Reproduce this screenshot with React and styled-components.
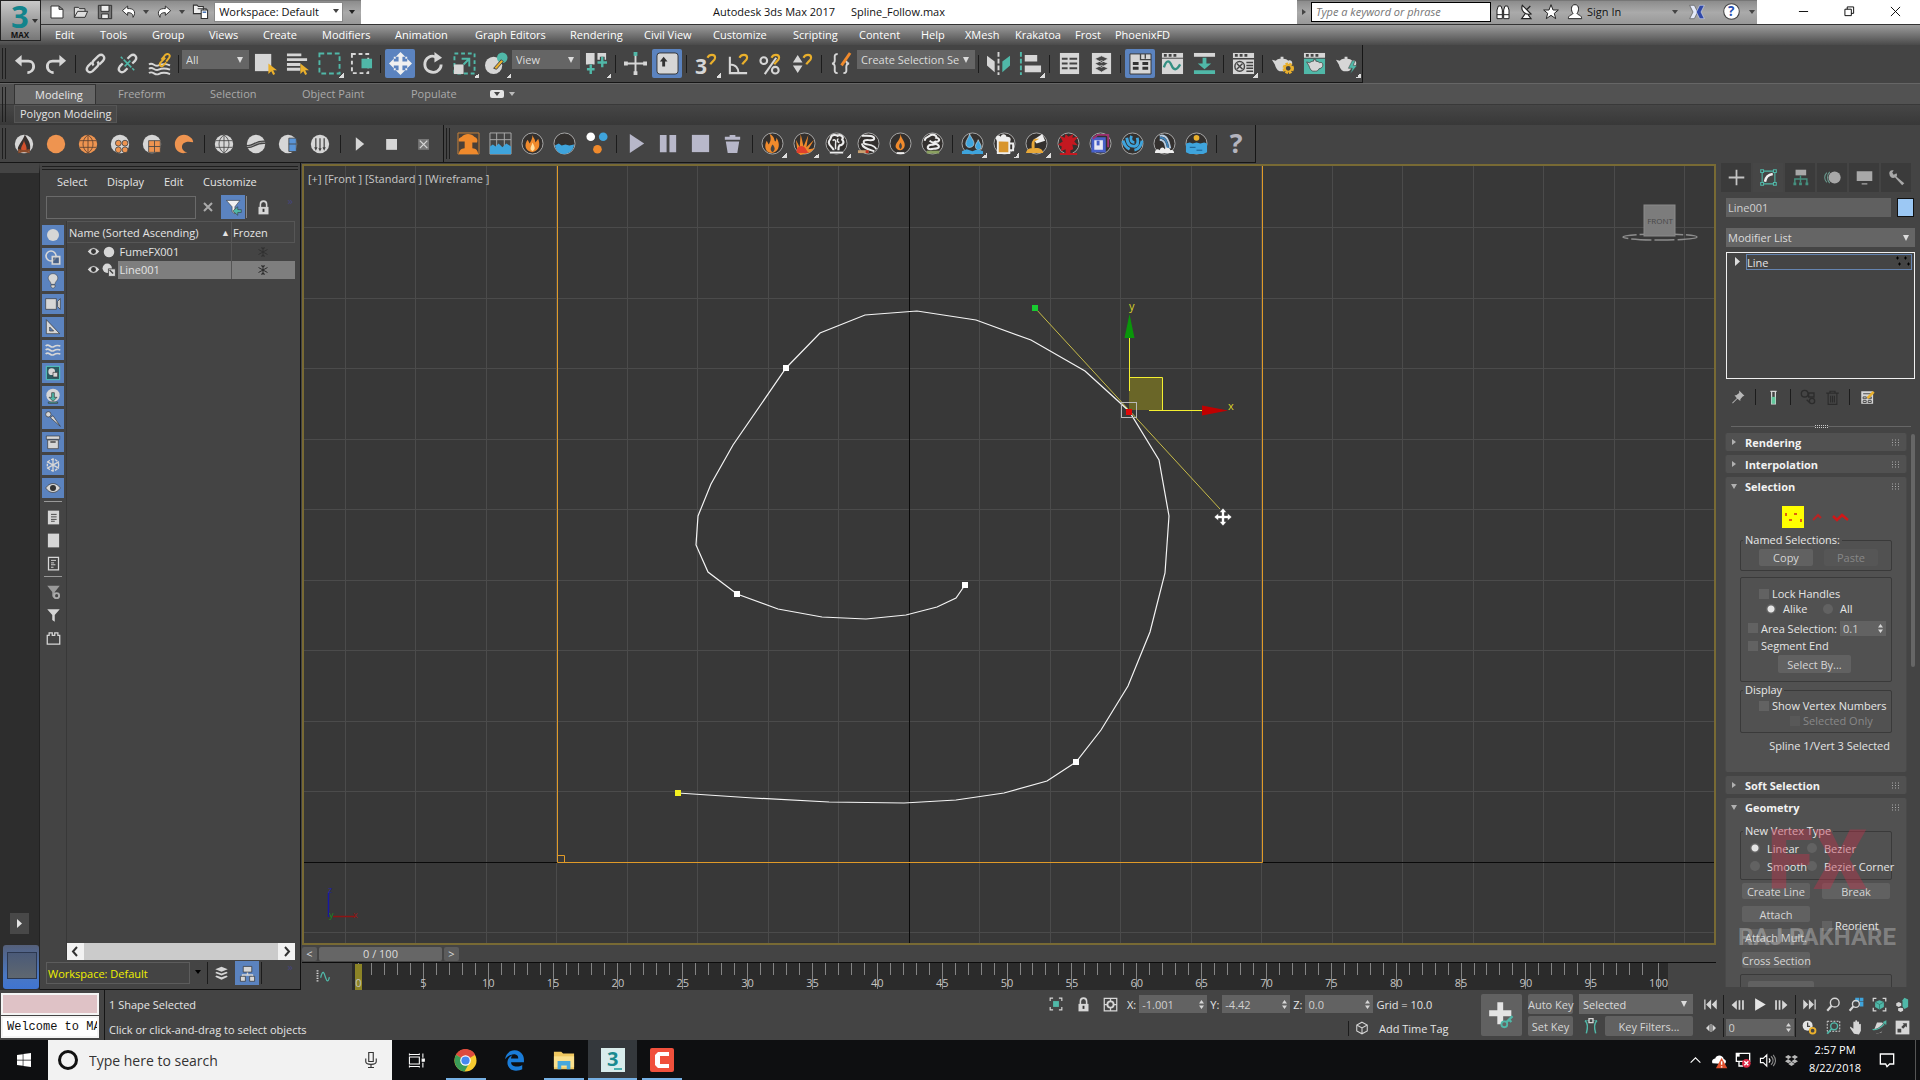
import React from "react";
import styled, { createGlobalStyle, css } from "styled-components";
import { FaWindows, FaEdgeLegacy, FaDropbox } from "react-icons/fa";

const GlobalStyle = createGlobalStyle`
  *, *::before, *::after {
    box-sizing: border-box;
  }
  body {
    margin: 0;
    background: #444;
    color: #e4e4e4;
    font-family: "Open Sans", "Noto Sans", sans-serif;
    font-size: 11px;
    overflow: hidden;
  }
  button, input, select {
    font: inherit;
    color: inherit;
    margin: 0;
    padding: 0;
    border: 0;
    border-radius: 0;
    background: none;
    min-width: 0;
  }
`;

const L = "#d6d6d6";
const TEAL = "#50b8a8";
const GOLD = "#eab02c";
const ORANGE = "#f08a2c";
const BLUE = "#3fa4dc";

/* ---------- shared parts ---------- */

const Svg = styled.svg`
  width: ${(p) => p.$size || 24}px;
  height: ${(p) => p.$size || 24}px;
  flex: none;
  display: block;
  overflow: visible;
`;

const Page = styled.div`
  display: flex;
  flex-direction: column;
  height: 100vh;
`;

const SelectWrap = styled.label`
  position: relative;
  display: block;
  flex: none;
  width: ${(p) => (p.$w ? p.$w + "px" : "100%")};
  height: ${(p) => p.$h || 19}px;

  & > select {
    appearance: none;
    width: 100%;
    height: 100%;
    padding: 0 14px 0 4px;
    background: #656565;
    color: #dcdcdc;
  }
  &::after {
    content: "";
    position: absolute;
    right: 6px;
    top: calc(50% - 3px);
    border: 3px solid transparent;
    border-top: 6px solid #dcdcdc;
    border-bottom: 0;
    pointer-events: none;
  }
`;

const Select = ({ w, h, label, value }) => (
  <SelectWrap $w={w} $h={h}>
    <select aria-label={label} defaultValue={value}>
      <option>{value}</option>
    </select>
  </SelectWrap>
);

const SpinWrap = styled.label`
  display: flex;
  align-items: center;
  gap: 3px;
  height: ${(p) => p.$h || 18}px;

  & > span:last-child {
    display: flex;
    align-items: center;
    width: ${(p) => p.$w || 68}px;
    height: 100%;
    background: #626262;
    color: #cfcfcf;
  }
  input {
    flex: 1;
    width: 10px;
    padding-left: 3px;
  }
`;

const Spin = ({ label, hidden, value, w, h }) => (
  <SpinWrap $w={w} $h={h}>
    {hidden ? null : <span>{label}</span>}
    <span>
      <input type="text" aria-label={label} defaultValue={value} />
      <Svg $size={11} viewBox="0 0 11 11">
        <path d="M3 4.5L5.500 1L8 4.500zM3 6.500L5.500 10L8 6.500z" fill={L} />
      </Svg>
    </span>
  </SpinWrap>
);

/* ---------- icon drawings ---------- */

const magnet = (
  <path d="M13 6c2-4 8-4 8 0 0 3-4 4-5 7" fill="none" stroke={GOLD} strokeWidth="2.200" />
);
const pointer = <path d="M15 12v11l3-3 2 4 2-1-2-4h4z" fill={GOLD} />;
const teapot = (
  <path
    d="M1 8l4 1c2-2 4-2 5-2V5h3v2c2 0 4 1 5 2 4-2 6 4 2 7l-3 1c-1 2-2 3-4 3H9c-3-1-4-4-5-7z"
    fill={L}
  />
);
const ring = <circle cx="12" cy="12" r="11" fill="#33302e" stroke="#a8a8a8" />;

const ICONS = {
  undo: <path d="M9 3L2 9l7 6v-4h7c3 0 4 1 4 4s-2 5-5 5v3c5-1 8-4 8-8s-3-7-7-7H9z" fill={L} />,
  redo: <path d="M15 3l7 6-7 6v-4H8c-3 0-4 1-4 4s2 5 5 5v3c-5-1-8-4-8-8s3-7 7-7h7z" fill={L} />,
  link: (
    <g fill="none" stroke={L} strokeWidth="2.400">
      <path d="M10 14c-2-2-1-4 0-5l5-5c4-3 8 1 5 5l-4 4" />
      <path d="M14 10c2 2 1 4 0 5l-5 5c-4 3-8-1-5-5l4-4" />
    </g>
  ),
  unlink: (
    <g fill="none" stroke={L} strokeWidth="2.400">
      <path d="M12 7l3-3c4-3 8 1 5 5l-3 3M12 17l-3 3c-4 3-8-1-5-5l3-3" />
      <path d="M8 8l8 8M5 5l2 2M17 17l2 2M9 15l6-6" stroke={TEAL} strokeWidth="1.600" />
    </g>
  ),
  bind: (
    <g fill="none" strokeWidth="2">
      <path d="M1 13c4-3 6 3 10 1s7-2 12 0M1 17.500c4-3 6 3 10 1s7-2 12 0M1 22c4-3 6 3 10 1s7-2 12 0" stroke={L} />
      <path d="M14 8l4-5c3-2 6 0 4 3l-3 4M18 6l-5 5c-2 3 1 5 3 3l3-3" stroke={GOLD} />
    </g>
  ),
  selectObject: (
    <g>
      <path d="M1 2h17v18H1z" fill={L} />
      {pointer}
    </g>
  ),
  selectName: (
    <g>
      <path d="M1 3h15M1 8h21M1 13h14M1 18h14" stroke={L} strokeWidth="3" />
      {pointer}
    </g>
  ),
  region: <path d="M1.500 1.500h21v21h-21z" fill="none" stroke={TEAL} strokeWidth="2" strokeDasharray="5 3" />,
  windowCross: (
    <g>
      <path d="M2 2h17v20H2z" fill="none" stroke={L} strokeWidth="2" strokeDasharray="4 3" />
      <path d="M12 7h11v10H12z" fill={TEAL} />
    </g>
  ),
  move: (
    <g fill="#f0f0f0">
      <path d="M12 0l5 5h-3v5h5V7l5 5-5 5v-3h-5v5h3l-5 5-5-5h3v-5H5v3l-5-5 5-5v3h5V5H7z" />
      <path d="M5 5h2v2H5zM17 5h2v2h-2zM5 17h2v2H5zM17 17h2v2h-2z" />
    </g>
  ),
  rotate: (
    <g>
      <path d="M16 6c-5-4-12 0-12 7s8 10 13 7c3-2 4-4 4-7" fill="none" stroke={L} strokeWidth="3" />
      <path d="M14 0v11l8-5z" fill={L} />
    </g>
  ),
  scale: (
    <g>
      <path d="M1.500 1.500h21v21h-21z" fill="none" stroke={TEAL} strokeWidth="2" strokeDasharray="4 3" />
      <path d="M1 13h10v10H1z" fill={L} />
      <path d="M9 7h8v8M17 7l-6 6" fill="none" stroke={TEAL} strokeWidth="2" />
    </g>
  ),
  place: (
    <g>
      <circle cx="9" cy="14" r="9" fill={L} />
      <circle cx="18" cy="6" r="5.500" fill={TEAL} />
      <path d="M9 17l8-9 2 2-7 8z" fill={GOLD} stroke="#444" />
    </g>
  ),
  pivot: (
    <g>
      <path d="M1 1h9v12H1zM13 1h9v7h-9z" fill={L} />
      <path d="M6 13v10M2 18h8M18 5v11M13 11h10" stroke="#444" strokeWidth="5" />
      <path d="M6 13v10M2 18h8M18 5v11M13 11h10" stroke={TEAL} strokeWidth="2.500" />
    </g>
  ),
  manipulate: (
    <g>
      <path d="M12 3v18M3 12h18" stroke={L} strokeWidth="2" />
      <path d="M10 0h4v4h-4z" fill={TEAL} />
      <path d="M0 10h4v4H0zM20 10h4v4h-4zM10 20h4v4h-4z" fill={L} />
    </g>
  ),
  keyboard: (
    <g>
      <rect x="1" y="1" width="22" height="22" rx="3" fill={L} stroke="#333" />
      <path d="M8 5l4 5H9.500v5h-3v-5H4z" fill="#333" />
    </g>
  ),
  snap3: (
    <g>
      <text x="0" y="23" fontSize="22" fontWeight="bold" fill={L}>3</text>
      {magnet}
    </g>
  ),
  angle: (
    <g>
      <path d="M3 5v17h18M3 13c6 0 9 4 9 9" fill="none" stroke={L} strokeWidth="2.200" />
      {magnet}
    </g>
  ),
  percent: (
    <g>
      <path d="M18 6L6 23" stroke={L} strokeWidth="2.200" />
      <circle cx="5" cy="9" r="3.500" fill="none" stroke={L} strokeWidth="2.200" />
      <circle cx="17" cy="19" r="3.500" fill="none" stroke={L} strokeWidth="2.200" />
      {magnet}
    </g>
  ),
  spinner: (
    <g>
      <path d="M2 11l5-8 5 8zM2 14h10l-5 8z" fill={L} />
      {magnet}
    </g>
  ),
  braces: (
    <g fill="none" stroke={L} strokeWidth="2">
      <path d="M8 2C4 2 5 5 5 8s-1 4-3 4c2 0 3 1 3 4s-1 6 3 6M14 22c4 0 3-3 3-6s1-4 3-4c-2 0-3-1-3-3" />
      <path d="M12 14L21 1" stroke={ORANGE} strokeWidth="3" />
    </g>
  ),
  mirror: (
    <g>
      <path d="M0 4l8 6v11l-8-7z" fill={L} />
      <path d="M24 4l-8 6v11l8-7z" fill={TEAL} />
      <path d="M12 0v24" stroke={L} strokeWidth="2" strokeDasharray="5 2" />
    </g>
  ),
  align: (
    <g>
      <path d="M2 0v24" stroke={TEAL} strokeWidth="2" strokeDasharray="5 2" />
      <path d="M6 3h13v7H6zM6 14h17v7H6z" fill={L} />
    </g>
  ),
  layers: (
    <g>
      <path d="M2 1h20v22H2z" fill={L} />
      <path d="M4 7h6M12 7h8M4 12h6M12 12h8M4 17h6M12 17h8" stroke="#444" strokeWidth="2.200" />
    </g>
  ),
  toggleLayers: (
    <g>
      <path d="M2 1h20v22H2z" fill={L} />
      <path d="M12 4l7 3-7 4-7-4zM12 9l7 3-7 4-7-4zM12 14l7 3-7 4-7-4z" fill="#444" stroke={L} strokeWidth=".8" />
    </g>
  ),
  ribbonToggle: (
    <g>
      <path d="M1 2h22v21H1z" fill={L} stroke="#333" />
      <path d="M12 2v6h11M17 2v5" stroke="#444" fill="none" strokeWidth="1.400" />
      <path d="M4 12h6M14 12h6M4 17h6M14 17h6" stroke="#333" strokeWidth="3" />
    </g>
  ),
  curve: (
    <g>
      <path d="M1 1h22v22H1z" fill={L} />
      <path d="M3 2h3v3H3zM8 2h3v3H8zM13 2h3v3h-3z" fill="#444" />
      <path d="M1 6.500h22" stroke="#444" />
      <path d="M3 16c3-9 6-7 8-2s5 6 9-1" fill="none" stroke="#338f82" strokeWidth="2.500" />
    </g>
  ),
  schematic: (
    <g>
      <path d="M1 1h22v4H1z" fill={L} />
      <path d="M1 19h22v4H1zM10 6h4v6h5l-7 6-7-6h5z" fill={TEAL} />
    </g>
  ),
  material: (
    <g>
      <path d="M1 1h22v22H1z" fill={L} />
      <path d="M3 2h3v3H3zM8 2h3v3H8zM13 2h3v3h-3z" fill="#444" />
      <path d="M1 7h22M15 11h7M15 14h7M15 17h7M15 20h7" stroke="#444" strokeWidth="1.500" />
      <circle cx="8" cy="15" r="5" fill="none" stroke="#444" strokeWidth="1.500" />
      <path d="M5 12l6 6M11 12l-6 6" stroke="#444" strokeWidth="1.500" />
    </g>
  ),
  renderSetup: (
    <g>
      {teapot}
      <circle cx="18" cy="17" r="4.500" fill="#444" stroke={GOLD} strokeWidth="3" strokeDasharray="2.600 1" />
      <circle cx="18" cy="17" r="3.500" fill="none" stroke={GOLD} strokeWidth="2" />
    </g>
  ),
  renderFrame: (
    <g>
      <path d="M1 1h22v5H1z" fill={L} />
      <path d="M3 2h3v3H3zM8 2h3v3H8zM13 2h3v3h-3z" fill="#444" />
      <path d="M1 7h22v16H1z" fill={TEAL} />
      <g transform="translate(3 4) scale(.8)" stroke="#444">{teapot}</g>
    </g>
  ),
  render: (
    <g>
      {teapot}
      <path d="M18 9l-4 8h4l-2 6 7-9h-4l2-5z" fill={TEAL} stroke="#444" strokeWidth=".6" />
    </g>
  ),

  fumeFx: (
    <g>
      <circle cx="12" cy="12" r="11" fill={L} />
      <path d="M13 1c4 6 8 11 6 19H5c-2-5 4-9 8-19z" fill="#37302e" />
      <path d="M12 7c0 4 4 7 3 13H9c-2-4 3-8 3-13z" fill="#d0502c" />
      <path d="M5 22l14-3M5 19l14 3" stroke="#8a4a2a" strokeWidth="2" />
    </g>
  ),
  orb: <circle cx="12" cy="12" r="11" fill="#ee9450" />,
  gridOrb: (
    <g>
      <circle cx="12" cy="12" r="11" fill="#ee9450" />
      <path d="M12 1v22M2 8h20M2 16h20M12 1c-8 6-8 16 0 22M12 1c8 6 8 16 0 22" stroke="#5a4030" fill="none" />
    </g>
  ),
  dotOrb: (
    <g>
      <circle cx="12" cy="12" r="11" fill={L} />
      <g fill="#ee9450" stroke="#444">
        <circle cx="10" cy="11" r="3.500" />
        <circle cx="18" cy="11" r="3.500" />
        <circle cx="10" cy="19" r="3.500" />
        <circle cx="18" cy="19" r="3.500" />
      </g>
    </g>
  ),
  boxOrb: (
    <g>
      <circle cx="12" cy="12" r="11" fill={L} />
      <path d="M8 8h14v14H8z" fill="#ee9450" stroke="#444" />
      <path d="M15 8v14M8 15h14" stroke="#444" />
    </g>
  ),
  crescent: <path d="M21 5C12-4 1 3 1 12s8 13 15 10c-9-1-10-16 7-12 0-2-1-4-2-5z" fill="#ee9450" />,
  wireOrb: (
    <g>
      <circle cx="12" cy="12" r="11" fill={L} />
      <path d="M12 1v22M2 8h20M2 16h20M12 1c-8 6-8 16 0 22M12 1c8 6 8 16 0 22" stroke="#444" fill="none" />
    </g>
  ),
  waveOrb: (
    <g>
      <circle cx="12" cy="12" r="11" fill={L} />
      <path d="M1 15c8 1 10-6 22-5" stroke="#444" strokeWidth="4" fill="none" />
      <path d="M1 15c8 1 10-6 22-5" stroke="#aaa" fill="none" />
    </g>
  ),
  panelOrb: (
    <g>
      <circle cx="12" cy="12" r="11" fill={L} />
      <path d="M13 5h9v16h-9zM13 12h9" fill="#5a95d8" stroke="#444" />
    </g>
  ),
  arrowsOrb: (
    <g>
      <circle cx="12" cy="12" r="11" fill={L} />
      <path d="M7 5v13M12 5v14M17 5v13" stroke="#444" strokeWidth="1.500" />
      <path d="M5 16h4l-2 4zM10 17h4l-2 4zM15 16h4l-2 4z" fill="#444" />
    </g>
  ),
  playFill: <path d="M7 4l10 8-10 8z" fill={L} />,
  stopFill: <path d="M5 6h13v13H5z" fill={L} />,
  stopCross: (
    <g>
      <path d="M5 6h13v13H5z" fill="#777" />
      <path d="M7 8l9 9M16 8l-9 9" stroke={L} strokeWidth="1.500" />
    </g>
  ),
  explosion: (
    <g>
      <path d="M1 1h22v22H1z" fill="#4a4038" stroke="#c8843c" />
      <path d="M2 10c-1-4 2-4 3-5 3-4 10-4 13 0 3 1 4 3 3 6h-5v6c4 0 6 3 6 6H2c0-3 2-6 6-6v-7z" fill={ORANGE} />
    </g>
  ),
  ocean: (
    <g>
      <path d="M1 1h22v22H1zM8 1v20M16 1v20M1 8h22" stroke="#aaa" fill="none" />
      <path d="M1 15l3-2 3 2 3-3 4 4 4-4 5 3v8H1z" fill={BLUE} />
    </g>
  ),
  fireRing: (
    <g>
      {ring}
      <path d="M12 3c1 4 3 4 3 8l3-4c2 6 2 12-6 14-8-1-9-8-5-13l2 4c1-2 3-5 3-9z" fill={ORANGE} />
      <path d="M12 11c2 4 4 7 0 9-4-2-1-5 0-9z" fill="#ffe0a0" />
    </g>
  ),
  waterRing: (
    <g>
      {ring}
      <path d="M2 14l4-2 3 2 4-1 4 1 5-1c-1 12-18 14-20 1z" fill={BLUE} />
    </g>
  ),
  particles: (
    <g>
      <circle cx="6" cy="5" r="4.500" fill="#fff" />
      <circle cx="19" cy="5" r="4.500" fill={BLUE} />
      <circle cx="13" cy="18" r="4.500" fill={ORANGE} />
    </g>
  ),
  simPlay: <path d="M5 2l15 10L5 22z" fill="#b8b8ca" />,
  simPause: <path d="M3 3h7v18H3zM13 3h7v18h-7z" fill="#b8b8ca" />,
  simStop: <path d="M3 3h18v18H3z" fill="#b8b8ca" />,
  simTrash: <path d="M9 3h6v2h5v3H4V5h5zM5 10h14l-2 12H7z" fill="#b8b8ca" />,
  flame: (
    <g>
      {ring}
      <path d="M9 2c6 3 4 6 6 8 1-1 1-3 1-4 4 5 4 14-4 16C4 22 3 14 6 9l2 4c2-3 3-6 1-11z" fill={ORANGE} />
      <path d="M12 13c3 3 3 6 0 8-3-2-2-5 0-8z" fill="#444" />
    </g>
  ),
  blast: (
    <g>
      {ring}
      <path d="M5 22L3 8l4 8L8 2l3 13 5-12-2 13 8-8-6 10 7-1-5 4-10 3z" fill={ORANGE} />
      <path d="M4 22c-2-6 5-10 9-5l3 5z" fill="#e0402c" />
    </g>
  ),
  smoke: (
    <g>
      {ring}
      <path d="M5 17h14v6H5z" fill="#333" />
      <path d="M5 21.500h14" stroke="#ececec" strokeWidth="2" />
      <path d="M9 19c0-3-5-4-5-8 0-3 2-3 2-5 1-4 6-3 7-2 3-2 7 1 5 4 3 3 0 6-3 6-1 1-1 3-1 5" fill="none" stroke="#ececec" strokeWidth="2.200" />
      <path d="M8 9c2-2 4 0 3 3M14 7c-2 1-1 4 1 4M11 12v6" fill="none" stroke="#ececec" strokeWidth="1.500" />
    </g>
  ),
  cigarette: (
    <g>
      {ring}
      <path d="M20 18c-2-7-14-3-13-8 1-4 10 1 11-3 0-4-8-3-13-3M18 20c-6-2-12-3-13-8" fill="none" stroke="#ececec" strokeWidth="2" />
      <path d="M1 19h11v3H1z" fill="#c8a070" />
      <path d="M9 19h3v3H9z" fill="#c03020" />
    </g>
  ),
  candle: (
    <g>
      {ring}
      <path d="M12 2c1 6 6 8 4 14-2 4-7 4-9 0-1-5 5-7 5-14z" fill={ORANGE} />
      <path d="M12 11c2 3 2 5 0 7-2-2-2-4 0-7z" fill="#444" />
      <path d="M8 21h8v2H8z" fill="#eee" />
    </g>
  ),
  clouds: (
    <g>
      {ring}
      <path d="M4 9c0-4 3-3 5-5 3-3 8 0 7 2 5 1 3 5-1 4-2 2-5 0-6-1M7 16c1-4 4-2 6-3 4-2 8 3 4 4-3 1-5 0-7 1-2 0-3-1-3-2" fill="none" stroke="#eee" strokeWidth="2.200" />
      <path d="M6 21h13" stroke="#8aa060" strokeWidth="3" />
    </g>
  ),
  drops: (
    <g>
      {ring}
      <path d="M9 2c2 5 6 8 4 12-2 3-8 3-8-2 0-3 3-6 4-10zM18 8c1 3 4 6 3 9-2 3-6 1-6-2 0-3 2-4 3-7z" fill={BLUE} stroke="#dfe8ee" strokeWidth=".6" />
      <path d="M1 20l5-2 6 2 5-2 6 2v3H1z" fill={BLUE} />
    </g>
  ),
  beer: (
    <g>
      {ring}
      <path d="M5 9h12v13H5z" fill="#d8952c" stroke="#eee" strokeWidth="2" />
      <path d="M4 9c-3-4 2-7 4-4 1-4 6-3 6 0 4-1 6 3 3 5z" fill="#eee" />
      <path d="M17 12h4v7h-4" fill="none" stroke="#eee" strokeWidth="2" />
    </g>
  ),
  honey: (
    <g>
      {ring}
      <path d="M9 8l9-6 3 7-9 3z" fill="#eee" />
      <path d="M10 7c-4 3-3 6-3 10-3 0-5 1-6 5h18c0-4-5-6-9-5V10l5-3z" fill="#e8a838" />
    </g>
  ),
  splat: (
    <g>
      {ring}
      <path d="M3 4l5 2 1-4 3 3 5-3-1 4 6-1-4 5 4 4-6-1 1 5-3 1v3h7v2H3v-2h6v-4l-5 2 1-5-4-2 5-3z" fill="#c41820" />
    </g>
  ),
  bucket: (
    <g>
      {ring}
      <path d="M4 7h12v13H4z" fill="#e8e8f4" stroke="#4860c8" strokeWidth="3" />
      <path d="M4 7l5-4h11v13" fill="none" stroke="#a03070" strokeWidth="2" />
      <path d="M8 9h3v5H8z" fill="#4860c8" />
    </g>
  ),
  swirl: (
    <g>
      {ring}
      <path d="M2 9c2 5 3 7 7 9M22 9c-1 6-3 9-8 10M6 6c1 7 3 9 8 9 4-1 4-5 3-9M11 4c-2 4 0 7 3 7" fill="none" stroke={BLUE} strokeWidth="3" />
    </g>
  ),
  waterfall: (
    <g>
      {ring}
      <path d="M7 4c7-2 10 6 11 13M7 8c5 0 6 5 7 10" fill="none" stroke="#b8cce0" strokeWidth="2" />
      <path d="M7 6c6-1 8 5 9 12" fill="none" stroke="#3f84bc" strokeWidth="2" />
      <path d="M2 22c0-4 3-5 5-3 1-4 5-3 5-1 3-3 6-1 6 1 3-1 4 1 4 3z" fill="#eee" />
    </g>
  ),
  sea: (
    <g>
      {ring}
      <circle cx="12" cy="6" r="3" fill={GOLD} />
      <path d="M1 12l4-1 3 1 4-1 4 1 4-1 3 1v9l-4 2H5l-4-2z" fill={BLUE} />
      <path d="M5 16h6M12 19h6" stroke="#1a5a8a" />
    </g>
  ),
  help: (
    <text x="5" y="22" fontSize="28" fontWeight="bold" fill="#b4b4be">?</text>
  ),

  circle: <circle cx="12" cy="12" r="9" fill={L} />,
  shapes: (
    <g stroke={L} strokeWidth="2.500" fill="none">
      <circle cx="9" cy="9" r="7.500" />
      <path d="M11 10h11v11H11z" fill="#3a4a60" fillOpacity=".6" />
    </g>
  ),
  shapesFill: (
    <g fill={L}>
      <circle cx="9" cy="9" r="8" />
      <path d="M11 10h12v13H11z" stroke="#444" strokeWidth="1.500" />
      <path d="M13 12l6 6" stroke="#444" strokeWidth="2.500" />
    </g>
  ),
  bulb: <path d="M12 1c-5 0-8 4-7 8 1 3 4 4 4 8h6c0-4 3-5 4-8 1-4-2-8-7-8zM9 18h6v3l-3 2-3-2z" fill={L} stroke="#333" strokeWidth=".7" />,
  camera: <path d="M1 4h16v16H1zM19 8l4-4v16l-4-4z" fill={L} stroke="#333" />,
  ruler: <path d="M2 1l20 21H2zM7 12v6h6z" fill={L} fillRule="evenodd" stroke="#333" />,
  waves: (
    <path d="M1 6c5-5 7 4 12 1s6-2 10-1M1 12c5-5 7 4 12 1s6-2 10-1M1 18c5-5 7 4 12 1s6-2 10-1" fill="none" stroke={L} strokeWidth="2.500" />
  ),
  group: (
    <g>
      <path d="M2 2h20v20H2z" fill="#2c5a60" stroke="#52c8c0" strokeWidth="1.500" />
      <circle cx="10" cy="10" r="5" fill={L} />
      <path d="M12 11h7v7h-7z" fill={L} stroke="#333" />
    </g>
  ),
  xref: (
    <g>
      <circle cx="12" cy="11" r="10" fill={L} />
      <path d="M10 7h4v7h4l-6 6-6-6h4zM5 21h14v2H5z" fill={TEAL} stroke="#333" />
    </g>
  ),
  bone: (
    <g fill={L} stroke="#333">
      <circle cx="5" cy="5" r="4" />
      <path d="M8 10l4-3 11 16z" />
    </g>
  ),
  container: (
    <g>
      <path d="M2 3h20v5H2zM4 9h16v13H4z" fill={L} stroke="#333" />
      <path d="M8 12h8" stroke="#333" strokeWidth="2" />
    </g>
  ),
  snow: (
    <g stroke={L} strokeWidth="2" fill="none">
      <path d="M12 2v20M3 7l18 10M21 7L3 17" />
      <circle cx="12" cy="12" r="8.500" strokeDasharray="4 2" />
    </g>
  ),
  flake: <path d="M12 2v20M3 7l18 10M21 7L3 17M8 3l4 3 4-3M8 21l4-3 4 3" stroke="#222" strokeWidth="1.800" fill="none" />,
  eye: (
    <g>
      <path d="M1 12c6-9 16-9 22 0-6 9-16 9-22 0z" fill={L} stroke="#333" />
      <circle cx="12" cy="12" r="4.500" fill="#333" />
    </g>
  ),
  doc: (
    <g>
      <path d="M3 1h18v22H3z" fill={L} />
      <path d="M8 7h9M8 11h9M8 15h9M8 18h6" stroke="#444" strokeWidth="1.500" />
    </g>
  ),
  docBlank: <path d="M3 1h18v22H3z" fill={L} />,
  docLine: (
    <g stroke={L} fill="none" strokeWidth="2">
      <path d="M4 2h16v20H4z" />
      <path d="M8 7h8M8 11h5M8 14h7M8 18h4" strokeWidth="1.500" />
    </g>
  ),
  funnelGear: (
    <g>
      <path d="M2 1h20l-8 10v11l-4-4v-7z" fill="#999" />
      <circle cx="17" cy="17" r="4" fill="#444" stroke="#aaa" strokeWidth="3" />
    </g>
  ),
  funnel: <path d="M2 2h20l-8 9v11l-4-3v-8z" fill={L} />,
  brick: <path d="M2 21V7h3V3h5v4h4V3h5v4h3v14z" fill="none" stroke={L} strokeWidth="2" />,
  funnelArrow: (
    <g>
      <path d="M2 2h19l-7 9v10l-4-3v-7z" fill="#f0f0f0" stroke="#333" strokeWidth=".8" />
      <path d="M23 15h-5v-4l-7 6 7 6v-4h5z" fill={TEAL} stroke="#333" strokeWidth=".8" />
    </g>
  ),
  lock: (
    <g>
      <path d="M7 11V7c0-7 10-7 10 0v4" fill="none" stroke={L} strokeWidth="2.500" />
      <path d="M4 11h16v12H4z" fill={L} />
      <path d="M12 14v5" stroke="#333" strokeWidth="3" />
    </g>
  ),
  stack: <path d="M12 1l10 4-10 4L2 5zM4 9l8 3 8-3 2 2-10 4L2 11zM4 15l8 3 8-3 2 2-10 5-10-5z" fill={L} />,
  tree: (
    <g fill={L} stroke="#333">
      <path d="M12 10v4M5 17v-3h14v3" fill="none" stroke={L} strokeWidth="2" />
      <path d="M6 2h12v8H6zM2 16h7v7H2zM15 16h7v7h-7z" />
    </g>
  ),

  tabCreate: <path d="M12 1v22M1 12h22" stroke="#c4c4c4" strokeWidth="2.500" />,
  tabModify: (
    <g>
      <path d="M3 3h18v18H3z" fill="none" stroke={TEAL} strokeWidth="1.500" />
      <path d="M1 1h4v4H1zM19 1h4v4h-4zM1 19h4v4H1zM19 19h4v4h-4z" fill="#444" stroke={TEAL} strokeWidth="1.500" />
      <path d="M7 18c1-7 4-10 11-11" fill="none" stroke="#f0f0f0" strokeWidth="3.500" />
    </g>
  ),
  tabHierarchy: (
    <g>
      <path d="M5 1h15v8H5z" fill="#a8a8a8" />
      <path d="M12 9v10M4 20v-6h17v6" stroke="#45907f" fill="none" strokeWidth="2" />
      <path d="M2 19h4v4H2zM10 19h4v4h-4zM19 19h4v4h-4z" fill="#45907f" />
    </g>
  ),
  tabMotion: (
    <g>
      <path d="M4 5c-4 4-4 10 0 14M8 4c-4 4-4 12 0 16" fill="none" stroke="#6a9a8e" strokeWidth="1.500" />
      <circle cx="15" cy="12" r="8.500" fill="#a8a8a8" />
    </g>
  ),
  tabDisplay: <path d="M1 3h22v14H1zM8 20h8v2H8z" fill="#a8a8a8" />,
  tabUtil: <path d="M2 7c-1-4 3-6 6-5L6 5l2 3 4-2c1 2 1 3 0 5l11 9-3 3-10-11C6 14 2 11 2 7z" fill="#a8a8a8" />,
  pin: <path d="M14 1l9 9-3 1-4 5v3l-5-4-8 8-1-1 8-8-4-5 3 0 5-4z" fill="#b8b8b8" />,
  tube: (
    <g>
      <path d="M7 2h10M9 3v19h6V3" fill="none" stroke={L} strokeWidth="2" />
      <path d="M9 11h6v11H9z" fill="#62c89c" />
    </g>
  ),
  unique: (
    <g fill="none" stroke="#2c2c2c" strokeWidth="2">
      <circle cx="7" cy="7" r="5" />
      <circle cx="18" cy="18" r="4" />
      <path d="M13 6h8v6h-8zM10 16l4 4" />
    </g>
  ),
  bin: <path d="M2 5h20M8 5V2h8v3M5 6v17h14V6M9 9v11M12 9v11M15 9v11" fill="none" stroke="#2c2c2c" strokeWidth="1.800" />,
  configure: (
    <g>
      <path d="M2 2h19v20H2z" fill={L} />
      <path d="M5 6h13M5 11h5v3H5zM13 11h5v3h-5zM5 17h5v3H5zM13 17h5v3h-5z" fill="none" stroke="#444" strokeWidth="1.500" />
      <path d="M12 13L22 3" stroke={GOLD} strokeWidth="4" />
    </g>
  ),

  isolate: (
    <g>
      <path d="M2 7V2h5M17 2h5v5M22 17v5h-5M7 22H2v-5" fill="none" stroke={L} strokeWidth="2" />
      <path d="M7 7h10v10H7z" fill={TEAL} />
    </g>
  ),
  absolute: (
    <g fill="none" stroke={L} strokeWidth="2">
      <path d="M2 2h20v20H2zM12 2v5M12 17v5M2 12h5M17 12h5" />
      <circle cx="12" cy="12" r="5" strokeWidth="3" />
    </g>
  ),
  cube: <path d="M12 2l9 5v10l-9 5-9-5V7zM3 7l9 5 9-5M12 12v10" fill="none" stroke={L} strokeWidth="1.800" />,
  addKey: (
    <g>
      <path d="M8 1h5v7h7v5h-7v7H8v-7H1V8h7z" fill="#e4e4e4" />
      <path d="M15 19l6-6M18 16l2 2" stroke={TEAL} strokeWidth="2" />
      <circle cx="14" cy="20" r="2.500" fill="#656565" stroke={TEAL} strokeWidth="1.600" />
    </g>
  ),
  tangent: (
    <g>
      <path d="M3 4c5 4 4 12 2 19M21 4c-5 4-4 12-2 19" fill="none" stroke={TEAL} strokeWidth="2.200" />
      <path d="M3 4h18" stroke={TEAL} />
      <path d="M9 1h6v6H9z" fill="#444" stroke={L} strokeWidth="2" />
    </g>
  ),
  toStart: <path d="M2 4h2v16H2zM13 4v16L5 12zM22 4v16l-8-8z" fill={L} />,
  toEnd: <path d="M20 4h2v16h-2zM11 4v16l8-8zM2 4v16l8-8z" fill={L} />,
  prevKey: <path d="M10 4v16L1 12zM13 4h3v16h-3zM19 4h3v16h-3z" fill={L} />,
  nextKey: <path d="M14 4v16l9-8zM8 4h3v16H8zM2 4h3v16H2z" fill={L} />,
  play: <path d="M5 2l17 10L5 22z" fill="#e4e4e4" />,
  keyMode: <path d="M9 5v14L2 12zM15 5v14l7-7zM11 4h2v16h-2z" fill={L} />,
  timeConfig: (
    <g>
      <circle cx="9" cy="9" r="8" fill="#e4e4e4" />
      <path d="M9 4v6h4" stroke="#444" fill="none" strokeWidth="2" />
      <circle cx="17" cy="17" r="4.500" fill="#444" stroke={GOLD} strokeWidth="3" />
    </g>
  ),
  zoom: (
    <g fill="none" stroke={L}>
      <circle cx="14" cy="9" r="7" strokeWidth="2.200" />
      <path d="M9 14l-7 8" strokeWidth="3.500" />
    </g>
  ),
  zoomAll: (
    <g fill="none">
      <path d="M10 1h6v6h-6zM17 1h6v6h-6zM17 8h6v7h-6z" fill={BLUE} />
      <circle cx="11" cy="11" r="5.500" stroke={L} strokeWidth="2.200" />
      <path d="M7 15l-6 7" stroke={L} strokeWidth="3.500" />
    </g>
  ),
  extents: (
    <g>
      <path d="M2 7V2h5M17 2h5v5M22 17v5h-5M7 22H2v-5" fill="none" stroke={L} strokeWidth="2" />
      <path d="M12 5l7 3v8l-7 4-7-4V8z" fill={TEAL} />
      <path d="M5 8l7 4 7-4M12 12v8" stroke="#2a6a60" fill="none" />
    </g>
  ),
  extentsAll: (
    <g>
      <path d="M15 1l6 3v12l-6 3-3-4V5z" fill={TEAL} />
      <path d="M6 8l4 2v4l-4 2-4-2v-4zM9 17l4 1v4l-4 2-4-2v-4z" fill={L} />
    </g>
  ),
  zoomRegion: (
    <g fill="none">
      <path d="M2 2h20v16H2z" stroke={L} strokeWidth="1.600" strokeDasharray="3 2" />
      <circle cx="13" cy="10" r="5.500" stroke={TEAL} strokeWidth="2.200" />
      <path d="M9 14l-7 8" stroke={TEAL} strokeWidth="3" />
    </g>
  ),
  pan: <path d="M8 22l-6-9c-1-2 1-3 2-1l3 2V4c0-2 2-2 3 0V2c0-2 3-2 3 0v2c0-2 3-2 3 0v3c1-2 3-1 3 0v10l-3 6z" fill={L} />,
  orbit: (
    <g fill="none" strokeWidth="2">
      <path d="M8 4h8l5 4-6 12-8 2-3-8z" fill={L} />
      <path d="M1 16c5 2 17-4 20-12M5 20c6 0 12-4 16-10" stroke="#444" strokeWidth="4" />
      <path d="M1 15c6 2 17-4 20-12M18 4l4-2v5" stroke={TEAL} />
    </g>
  ),
  maximize: (
    <g>
      <path d="M1 1h22v22H1z" fill={L} />
      <path d="M4 14h6v6H4zM12 5h7v7l-2-2-4 4-3-3 4-4z" fill="#444" />
    </g>
  ),
  curveSmall: (
    <g fill="none">
      <path d="M4 2v20" stroke={L} strokeWidth="3" strokeDasharray="2 2" />
      <path d="M9 14c4-16 6-6 8 0s4 8 6-1" stroke={TEAL} strokeWidth="2" />
    </g>
  ),

  newFile: <path d="M3 3h12l6 5v13H3zM15 3v5h6" fill="#fff" stroke="#333" strokeWidth="1.500" />,
  open: <path d="M2 20V5h6l2 2h8v4M2 20l5-9h15l-4 9z" fill="#ddd" stroke="#333" strokeWidth="1.500" />,
  save: (
    <g stroke="#333" strokeWidth="1.500">
      <path d="M2 2h20v20H2z" fill="#777" />
      <path d="M6 2h12v9H6zM7 15h10v7H7z" fill="#eee" />
    </g>
  ),
  undoSmall: <path d="M10 3L2 10l8 7v-4c6 0 8 2 8 7 6-9 0-14-8-13z" fill="#fff" stroke="#333" strokeWidth="1.500" />,
  redoSmall: <path d="M14 3l8 7-8 7v-4c-6 0-8 2-8 7C0 11 6 6 14 7z" fill="#fff" stroke="#333" strokeWidth="1.500" />,
  project: (
    <g stroke="#333" strokeWidth="1.500">
      <path d="M2 3h5l2 2h7v10H2zM8 8h12v5" fill="#eee" />
      <path d="M13 10h9v12h-9z" fill="#fff" />
      <path d="M15 13h5" stroke="#3a6ab0" strokeWidth="2" />
    </g>
  ),
  binoculars: <path d="M3 22V9l2-6h4l2 6v13zM13 22V9l2-6h4l2 6v13zM3 16h8M13 16h8M11 11h2" fill="#fff" stroke="#222" strokeWidth="1.500" />,
  dish: <path d="M5 2c-3 8 4 15 13 13zM11 9l6-6M9 15l-5 7h14l-5-7" fill="#fff" stroke="#222" strokeWidth="1.800" />,
  star: <path d="M12 1l3 8h8l-6 5 2 8-7-5-7 5 2-8-6-5h8z" fill="#fff" stroke="#222" strokeWidth="1.500" />,
  user: <path d="M12 1c-7 0-6 10-3 13-1 3-7 2-7 8h20c0-6-6-5-7-8 3-3 4-13-3-13z" fill="#fff" stroke="#222" strokeWidth="1.500" />,
  exchange: (
    <g>
      <path d="M1 2h7l5 10-5 10H1l5-10z" fill="#e4eafa" stroke="#555" />
      <path d="M23 2h-7l-5 10 5 10h7l-5-10z" fill="#3048a8" stroke="#e4eafa" strokeWidth=".8" />
    </g>
  ),
  helpBall: (
    <g>
      <circle cx="12" cy="12" r="11" fill="#fff" stroke="#444" strokeWidth="1.500" />
      <text x="7" y="19" fontSize="19" fontWeight="bold" fill="#2850b0">?</text>
    </g>
  ),
  minimize: <path d="M2 12h20" stroke="#000" strokeWidth="2" />,
  restore: <path d="M2 7h14v14H2zM7 7V2h14v14h-5" fill="none" stroke="#000" strokeWidth="2" />,
  close: <path d="M2 2l20 20M22 2L2 22" stroke="#000" strokeWidth="2" />,

  mic: <path d="M9 2h6v12H9zM5 10v4c0 5 14 5 14 0v-4M12 18v4M8 22h8" fill="none" stroke="#333" strokeWidth="1.500" />,
  taskView: (
    <g stroke="#fff" fill="none" strokeWidth="1.500">
      <path d="M2 7h14v10H2zM2 5V2M2 3.500h14V2M2 22v-3M2 20.500h14V22M21 2v6M21 15v7" />
      <path d="M20 10h3v3h-3z" fill="#fff" />
    </g>
  ),
  chrome: (
    <g>
      <circle cx="12" cy="12" r="11.500" fill="#f8cc30" />
      <path d="M12 12L2 6C7-3 19-1 22 6z" fill="#dd4b3e" />
      <path d="M2 6c-4 8 1 17 9 17.500l5-9L12 12z" fill="#3a9c58" />
      <circle cx="12" cy="12" r="5.500" fill="#fff" />
      <circle cx="12" cy="12" r="4.300" fill="#4688f0" />
    </g>
  ),
  folder: (
    <g>
      <path d="M1 3h8l2 2h12v17H1z" fill="#f0c860" />
      <path d="M1 8h22v12H1z" fill="#fbe08c" />
      <path d="M5 22v-9h14v9h-4v-4H9v4z" fill="#48a8dc" />
    </g>
  ),
  maxTile: (
    <g>
      <path d="M0 0h24v24H0z" fill="#d8ecec" />
      <text x="6" y="18" fontSize="20" fontWeight="bold" fill="#1a8a90">3</text>
      <path d="M13 20h8v2h-8z" fill="#4ab0b0" />
    </g>
  ),
  camtasia: (
    <g>
      <rect width="24" height="24" rx="2" fill="#f0503c" />
      <path d="M19 4H8L5 7v10l3 3h11v-4h-9V8h9z" fill="#fff" />
    </g>
  ),
  chevronUp: <path d="M3 16l9-9 9 9" fill="none" stroke="#fff" strokeWidth="2" />,
  cloudWarn: (
    <g>
      <path d="M2 16c-2-6 3-7 4-7 2-6 11-5 12 1 4 1 4 6 1 7z" fill="#fff" />
      <path d="M15 8l8 15H7z" fill="#e0502c" />
      <path d="M15 13v5M15 20v2" stroke="#fff" strokeWidth="2" />
    </g>
  ),
  netError: (
    <g>
      <path d="M2 2h20v12H2zM6 14v7h6" fill="none" stroke="#fff" strokeWidth="2" />
      <path d="M2 2h5v5H2z" fill="#fff" />
      <circle cx="17" cy="17" r="6.500" fill="#e02844" />
      <path d="M14 14l6 6M20 14l-6 6" stroke="#fff" strokeWidth="2" />
    </g>
  ),
  volume: (
    <g fill="none" stroke="#fff" strokeWidth="1.600">
      <path d="M2 9h4l5-5v16l-5-5H2zM14 9c2 2 2 4 0 6" />
      <path d="M17 6c4 4 4 8 0 12M20 4c4 5 4 11 0 16" stroke="#888" />
    </g>
  ),
  notify: <path d="M2 3h20v15h-6l-4 4-2-4H2z" fill="none" stroke="#fff" strokeWidth="2" />,
};

const Icon = ({ name, size }) => (
  <Svg $size={size} viewBox="0 0 24 24" aria-hidden="true">
    {ICONS[name]}
  </Svg>
);

/* ---------- title bar ---------- */

const TitleBar = styled.header`
  position: relative;
  display: flex;
  align-items: stretch;
  height: 24px;
  background: #fff;
  color: #111;
`;
const LogoButton = styled.button`
  position: absolute;
  z-index: 2;
  left: 0;
  top: 0;
  width: 41px;
  height: 41px;
  border: 1px solid #222;
  background: linear-gradient(#c8c8c8, #777);
`;
const QuickAccess = styled.div`
  display: flex;
  align-items: center;
  width: 361px;
  padding: 0 0 2px 45px;
  background: linear-gradient(#8c8c8c, #aaa 50%, #989898);
  border-top: 1px solid #777;
`;
const QuickButton = styled.button`
  display: grid;
  place-items: center;
  width: ${(p) => p.$w || 24}px;
  height: 20px;
`;
const Caret = styled.span`
  border: 3px solid transparent;
  border-top: 4px solid ${(p) => p.$color || "#444"};
  border-bottom: 0;
`;
const WorkspaceSelect = styled(SelectWrap)`
  margin-left: 2px;
  & > select {
    background: #fff;
    color: #111;
    border: 1px solid #888;
  }
  &::after {
    right: 4px;
    border-top: 4px solid #444;
  }
`;
const Title = styled.h1`
  flex: 1;
  margin: 0;
  padding-bottom: 2px;
  display: flex;
  justify-content: center;
  align-items: center;
  gap: 16px;
  font-size: 11px;
  font-weight: normal;
`;
const InfoCenter = styled.div`
  display: flex;
  align-items: center;
  width: 460px;
  padding-bottom: 2px;
  background: linear-gradient(#8c8c8c, #aaa 50%, #989898);
  border-top: 1px solid #777;

  & > input {
    width: 180px;
    height: 20px;
    padding: 0 4px;
    border: 1px solid #000;
    background: #fff;
    font-style: italic;
    font-size: 11px;
  }
`;
const SignIn = styled.button`
  display: flex;
  justify-content: space-between;
  align-items: center;
  width: 94px;
  padding: 0 3px 0 0;
`;
const WindowButtons = styled.div`
  display: flex;
  align-items: center;
  padding: 0 2px 2px 23px;

  & > button {
    display: grid;
    place-items: center;
    width: 46px;
    height: 22px;
  }
`;

/* ---------- menu bar, ribbon and toolbars ---------- */

const MenuBar = styled.nav`
  display: flex;
  align-items: center;
  height: 21px;
  padding: 0 0 2px 55px;
  border-top: 1px solid #333;
  background: linear-gradient(#9c9c9c, #4a4a4a);
  color: #fff;
`;
const MenuItem = styled.button`
  width: ${(p) => p.$w}px;
  text-align: left;
  white-space: nowrap;
`;

const grip = css`
  &::before {
    content: "";
    width: 4px;
    margin: 3px 2px 3px 2px;
    border: solid #1e1e1e;
    border-width: 0 1px;
    flex: none;
  }
`;
const ToolRow = styled.div`
  display: flex;
  height: ${(p) => p.$h || 38}px;
`;
const Toolbar = styled.div`
  display: flex;
  align-items: center;
  border: solid #161616;
  border-width: 0 1px 1px 0;
  padding-right: ${(p) => p.$end || 0}px;
  ${grip}

  &::before {
    align-self: stretch;
  }
  & > label {
    margin-bottom: 8px;
  }
  & > i {
    width: ${(p) => p.$sep}px;
    height: 18px;
    background: linear-gradient(#1c1c1c, #1c1c1c) center / 1px 100% no-repeat;
  }
`;
const ToolButton = styled.button`
  position: relative;
  display: grid;
  place-items: center;
  flex: none;
  width: 30px;
  height: 29px;
  margin: 0 1px;
  border-radius: 2px;
  background: ${(p) => (p.$on ? "#5b83bf" : "none")};

  ${(p) =>
    p.$fly &&
    css`
      &::after {
        content: "";
        position: absolute;
        right: 0;
        bottom: 0;
        width: 5px;
        height: 5px;
        background: linear-gradient(135deg, transparent 50%, #ddd 50%);
      }
    `}
`;
const Ribbon = styled.div`
  display: flex;
  height: 42px;
  border-top: 1px solid #666;
  background: linear-gradient(#525252 20px, #2c2c2c 20px, #464646 21px, #383838);
  ${grip}
`;
const RibbonBody = styled.div`
  flex: 1;
  padding-left: 6px;
`;
const RibbonTabs = styled.div`
  display: flex;
  align-items: center;
  height: 20px;
  color: #aaa;
`;
const RibbonTab = styled.button`
  width: ${(p) => p.$w}px;
  height: 20px;
  padding-left: ${(p) => (p.$on ? 20 : 0)}px;
  padding-bottom: 1px;
  margin-right: ${(p) => p.$gap || 0}px;
  text-align: left;
  ${(p) =>
    p.$on &&
    css`
      color: #e8e8e8;
      background: #666;
      border: 1px solid #333;
      border-bottom: 0;
    `}
`;
const RibbonPanel = styled.button`
  display: block;
  height: 18px;
  margin-top: 1px;
  padding: 0 5px;
  border: 1px solid #555;
  background: #484848;
  line-height: 14px;
`;
const MinimizeRibbon = styled.button`
  display: flex;
  align-items: center;
  gap: 5px;

  & > span:first-child {
    display: grid;
    place-items: center;
    width: 14px;
    height: 8px;
    border-radius: 2px;
    background: #e4e4e4;
  }
`;

/* ---------- scene explorer ---------- */

const Main = styled.div`
  flex: 1;
  min-height: 0;
  display: flex;
`;
const LayoutStrip = styled.div`
  display: flex;
  flex-direction: column;
  justify-content: flex-end;
  align-items: flex-end;
  gap: 11px;
  width: 40px;
  padding-bottom: 1px;
  border-top: 10px solid #444;
  border-right: 1px solid #222;
  background: #2d2d2d;
`;
const ExpandButton = styled.button`
  display: grid;
  place-items: center;
  width: 19px;
  height: 21px;
  margin-right: 10px;
  background: #484848;
`;
const LayoutButton = styled.button`
  width: 36px;
  height: 44px;
  padding: 7px 2px 10px 4px;
  border-radius: 3px;
  background: linear-gradient(#55607a, #4a78c4 70%, #3f74d0);

  & > span {
    display: block;
    height: 27px;
    border: 1px solid #2c3850;
    background: linear-gradient(#4a5a78, #5f676f);
  }
`;
const Explorer = styled.section`
  display: flex;
  flex-direction: column;
  width: 261px;
  border-right: 1px solid #111;
  border-bottom: 1px solid #111;
  margin-right: 1px;
  padding-top: 3px;

  &::before {
    content: "";
    height: 4px;
    margin: 0 2px;
    border: solid #1e1e1e;
    border-width: 1px 0;
  }
`;
const ExplorerMenu = styled.nav`
  display: flex;
  height: 24px;
  padding: 0 0 2px 17px;
`;
const FindRow = styled.div`
  display: flex;
  align-items: center;
  height: 26px;
  padding-left: 6px;

  & > input {
    width: 150px;
    height: 23px;
    border: 1px solid #6a6a6a;
    padding: 0 4px;
  }
`;
const More = styled.span`
  margin: 0 7px 12px auto;
  line-height: 12px;
  color: #45457c;
`;
const SmallButton = styled.button`
  display: grid;
  place-items: center;
  width: ${(p) => p.$w || 24}px;
  height: 24px;
  margin: 0 1px 0 0;
  background: ${(p) => (p.$on ? "#5b83bf" : "none")};
`;
const VLine = styled.span`
  width: 1px;
  height: ${(p) => p.$h || 22}px;
  background: ${(p) => p.$color || "#1c1c1c"};
`;
const ExplorerBody = styled.div`
  flex: 1;
  min-height: 0;
  display: flex;
  padding-top: 1px;
`;
const FilterColumn = styled.div`
  display: flex;
  flex-direction: column;
  gap: 3px;
  width: 26px;
  padding: 4px 2px;

  & > hr {
    width: 18px;
    margin: 0 auto 2px;
    border: 0;
    border-top: 1px solid #999;
  }
`;
const FilterButton = styled.button`
  display: grid;
  place-items: center;
  width: 22px;
  height: 20px;
  background: ${(p) => (p.$on ? "#5b83bf" : "none")};
`;
const SceneList = styled.div`
  flex: 1;
  display: flex;
  flex-direction: column;
  justify-content: space-between;
  margin-right: 5px;
  border-left: 1px solid #383838;
`;
const SceneTable = styled.table`
  border-collapse: collapse;
  table-layout: fixed;
  width: 100%;

  th,
  td {
    height: 18px;
    padding: 0 2px;
    text-align: left;
    font-weight: normal;
    white-space: nowrap;
  }
  th {
    height: 21px;
    padding: 0 1px;
    border: 1px solid #565656;
    border-left-color: #4a4a4a;
  }
  th > span {
    float: right;
    font-size: 9px;
    line-height: 15px;
  }
  td svg {
    margin: 0 auto;
  }
`;
const SceneRow = styled.tr`
  & > td:nth-child(n + 2) {
    background: ${(p) => (p.$on ? "#7e7e7e" : "none")};
  }
  & > td:last-child {
    border-left: 1px solid #555;
  }
  & > td:last-child svg {
    opacity: ${(p) => (p.$on ? 1 : 0.6)};
  }
`;
const RowIcons = styled.span`
  display: flex;
  justify-content: flex-end;
  gap: 2px;

  && > svg {
    margin: 0;
  }
`;
const HScroll = styled.div`
  display: flex;
  height: 17px;
  background: #f2f2f2;
  color: #333;

  & > button {
    width: 17px;
    display: grid;
    place-items: center;
  }
  & > span {
    flex: 1;
    background: #cbcbcb;
  }
`;
const ExplorerFoot = styled.div`
  display: flex;
  align-items: center;
  gap: 1px;
  height: 29px;
  padding: 0 0 3px 6px;
`;
const LayerSelect = styled(SelectWrap)`
  & > select {
    background: none;
    color: #f0f000;
    border: 1px solid #5c5c5c;
    padding-left: 1px;
    width: 144px;
  }
  &::after {
    right: 5px;
    border-top: 4px solid #000;
  }
`;

/* ---------- viewport, slider and track bar ---------- */

const Center = styled.main`
  flex: 1;
  min-width: 0;
  display: flex;
  flex-direction: column;
`;
const Viewport = styled.div`
  position: relative;
  flex: 1;
  min-height: 0;
  margin-top: 1px;
  border: 2px solid #786a34;
  background: #383838;
  overflow: hidden;

  & > svg {
    position: absolute;
    inset: 0;
    width: 100%;
    height: 100%;
  }
`;
const ViewLabels = styled.div`
  position: absolute;
  z-index: 1;
  top: 5px;
  left: 4px;
  display: flex;
  gap: 3px;
  color: #c8c8c8;
`;
const SliderRow = styled.div`
  display: flex;
  gap: 2px;
  height: 18px;
  padding: 2px 0 1px;
  border-bottom: 1px solid #0c0c0c;

  & > button {
    width: 15px;
    background: #5c5c5c;
    color: #ddd;
    border-radius: 2px;
    line-height: 14px;
  }
  & > button:nth-child(2) {
    width: 123px;
    background: #666;
  }
`;
const TrackRow = styled.div`
  display: flex;
  height: 27px;

  & > button {
    display: grid;
    place-items: center;
    width: 41px;
    margin-right: 9px;
  }
`;
const Ruler = styled.div`
  flex: 1;
  display: grid;
  grid-template-columns: repeat(101, 1fr);
  margin-right: 48px;
  background: #2b2b2b;
`;
const Frame = styled.div`
  position: relative;
  display: flex;
  justify-content: center;
  align-items: flex-end;
  background: linear-gradient(#858585, #858585) top center / 1px ${(p) => (p.$major ? 26 : 12)}px no-repeat;

  & > span {
    position: relative;
    line-height: 15px;
    color: #c4c4c4;
    white-space: nowrap;
  }
  ${(p) =>
    p.$now &&
    css`
      &::before {
        content: "";
        position: absolute;
        inset: 1px 3px 0 3px;
        background: #8c8426;
      }
    `}
`;

/* ---------- command panel ---------- */

const CommandPanel = styled.aside`
  display: flex;
  flex-direction: column;
  width: 204px;
  padding: 0 0 0 6px;
  margin-bottom: 3px;
`;
const PanelTabs = styled.div`
  display: flex;
  height: 29px;
  margin-left: -2px;

  & > button {
    display: grid;
    place-items: center;
    width: 30px;
    margin: 0 1px;
    background: #3b3b3b;
  }
  & > button:nth-child(2) {
    background: #464646;
  }
`;
const NameRow = styled.div`
  display: flex;
  justify-content: space-between;
  margin: 6px 6px 0 4px;
  height: 19px;

  & > input[type="text"] {
    width: 165px;
    background: #606060;
    color: #d0d0d0;
    padding: 0 2px;
  }
  & > input[type="color"] {
    width: 17px;
    height: 19px;
    border: 1px solid #111;
    appearance: none;
    padding: 0;
  }
  & > input[type="color"]::-webkit-color-swatch-wrapper {
    padding: 0;
  }
  & > input[type="color"]::-webkit-color-swatch {
    border: 0;
  }
`;
const ModifierSelect = styled.div`
  margin: 11px 5px 5px 4px;
  & select {
    padding-left: 2px;
  }
`;
const Stack = styled.div`
  height: 127px;
  margin: 0 5px 0 4px;
  border: 1px solid #f0f0f0;
  padding-top: 1px;
  display: flex;
  align-items: flex-start;

  & > svg {
    margin: 3px 4px 0 6px;
  }
`;
const StackItem = styled.button`
  flex: 1;
  display: flex;
  justify-content: space-between;
  align-items: center;
  height: 16px;
  margin-right: 2px;
  border: 1px solid #6584b0;
  color: #e4e4e4;
`;
const StackTools = styled.div`
  display: flex;
  align-items: center;
  height: 36px;
  padding-left: 4px;

  & > button {
    display: grid;
    place-items: center;
    width: 24px;
  }
  & > span {
    margin: 0 5px;
  }
`;
const Divider = styled.div`
  height: 12px;
  margin: 5px 9px 0;
  background: linear-gradient(#666, #666) center / 100% 1px no-repeat;
  display: grid;
  place-items: center;
`;
const Rollouts = styled.div`
  flex: 1;
  min-height: 0;
  overflow: hidden;
  position: relative;
  display: flex;
  flex-direction: column;
  gap: 4px;
  margin: 1px 13px 0 3px;
`;
const ScrollArea = styled.div`
  flex: 1;
  min-height: 0;
  position: relative;
  display: flex;
  flex-direction: column;

  &::after {
    content: "";
    position: absolute;
    right: 5px;
    top: 2px;
    width: 4px;
    height: 42%;
    background: #666;
    border-radius: 2px;
  }
`;
const Rollout = styled.section`
  flex: none;
  background: #515151;
  border: 1px solid #494949;
  border-width: 0 1px;
  border-radius: 2px;
`;
const RolloutHead = styled.button`
  display: flex;
  align-items: center;
  width: 100%;
  height: 18px;
  padding: 0 7px 0 5px;
  font-weight: bold;
  color: #f2f2f2;

  & > svg:first-child {
    margin-right: 8px;
  }
  & > svg:last-child {
    margin-left: auto;
  }
`;
const Group = styled.fieldset`
  min-width: 0;
  margin: ${(p) => p.$top || 0}px 14px 0;
  padding: ${(p) => p.$pad || 2}px 5px 4px 7px;
  border: 1px solid #3a3a3a;
  border-radius: 2px;

  & > legend {
    height: 14px;
    line-height: 14px;
    padding: 0 2px;
    margin-left: -5px;
    color: #e8e8e8;
  }
`;
const Line = styled.div`
  display: flex;
  align-items: center;
  height: ${(p) => p.$h || 16}px;
  padding-left: ${(p) => p.$in || 0}px;
  gap: ${(p) => p.$gap || 0}px;
`;
const Check = styled.label`
  display: flex;
  align-items: center;
  gap: 3px;
  white-space: nowrap;
  width: ${(p) => (p.$w ? p.$w + "px" : "auto")};
  color: ${(p) => (p.$off ? "#888" : "#e6e6e6")};

  & > input {
    appearance: none;
    flex: none;
    width: 10px;
    height: 10px;
    background: #626262;
  }
  & > input[type="radio"] {
    border-radius: 50%;
    margin-right: 4px;
  }
  & > input[type="radio"]:checked {
    background: radial-gradient(#e4e4e4 3px, #626262 4px);
  }
  & > input:disabled {
    background: #585858;
  }
`;
const PushButton = styled.button`
  width: ${(p) => (p.$w ? p.$w + "px" : "auto")};
  height: ${(p) => p.$h || 17}px;
  background: #616161;
  border-radius: 2px;
  color: #d6d6d6;
  white-space: nowrap;

  &:disabled {
    background: #565656;
    color: #878787;
  }
`;
const SubObjects = styled.div`
  display: flex;
  justify-content: center;
  align-items: center;
  gap: 2px;
  padding: 11px 0 5px 2px;

  & > button {
    display: grid;
    place-items: center;
    width: 22px;
    height: 22px;
  }
  & > button:first-child {
    background: #ffff00;
  }
`;
const SelectionInfo = styled.p`
  margin: 0;
  padding: 5px 16px 19px;
  text-align: right;
  line-height: 15px;
`;
const ButtonGrid = styled.div`
  display: grid;
  grid-template-columns: 68px 68px;
  gap: 7px 12px;
  padding: 3px 16px 6px;
  align-items: center;

  & > label {
    grid-row: 2 / 4;
    grid-column: 2;
  }
`;
const Watermark = styled.div`
  position: absolute;
  z-index: 1;
  left: 0;
  right: 8px;
  bottom: 30px;
  display: flex;
  flex-direction: column;
  align-items: center;
  pointer-events: none;
  font-family: Roboto, sans-serif;
  font-weight: bold;
  color: rgba(220, 220, 220, 0.36);
  font-size: 24px;
  line-height: 40px;
  white-space: nowrap;

  & > strong {
    font-size: 84px;
    line-height: 112px;
    color: rgba(190, 50, 75, 0.42);
  }
`;

/* ---------- status bar ---------- */

const StatusBar = styled.footer`
  display: flex;
  height: 50px;
`;
const Listener = styled.div`
  width: 105px;
  padding: 3px 6px 2px 1px;
  border-right: 1px solid #161616;

  & > input {
    display: block;
    width: 98px;
    height: 22px;
    border: 2px solid #f4f4f4;
    font-family: "Liberation Mono", monospace;
    font-size: 12px;
    color: #111;
    padding: 0 0 0 4px;
  }
  & > input:first-child {
    background: #dfc2c6;
    margin-bottom: 1px;
  }
  & > input:last-child {
    background: #fff;
  }
`;
const Prompts = styled.div`
  flex: 1;
  padding-left: 4px;

  & > p {
    margin: 0;
    height: 25px;
    line-height: 29px;
    font-size: 11px;
  }
`;
const Coords = styled.div`
  width: 437px;
`;
const CoordRow = styled.div`
  display: flex;
  align-items: center;
  height: 24px;
  padding-top: 4px;
  gap: 3px;
  justify-content: ${(p) => p.$justify || "flex-start"};

  & > button + label {
    margin-left: 2px;
  }
`;
const StatusIcon = styled.button`
  display: grid;
  place-items: center;
  width: 24px;
`;
const TimeTag = styled.button`
  display: flex;
  align-items: center;
  gap: 10px;
  width: 133px;
  padding-left: 6px;
  border-left: 1px solid #1c1c1c;
`;
const Keys = styled.div`
  display: grid;
  grid-template-columns: 41px 45px 20px 88px;
  grid-template-rows: 20px 20px;
  gap: 2px 6px;
  width: 217px;
  padding-top: 4px;

  & > button:first-child {
    grid-row: span 2;
    display: grid;
    place-items: center;
    height: 42px;
  }
  & > label {
    grid-column: 3 / 5;
  }
`;
const PlayGrid = styled.div`
  display: grid;
  grid-template-columns: 25px 73px 26px repeat(4, 23px);
  grid-template-rows: 23px 23px;
  padding-top: 3px;
  padding-right: 6px;

  & > button,
  & > div > button {
    position: relative;
    display: grid;
    place-items: center;
  }
`;
const PlayCell = styled.div`
  display: flex;
  align-items: center;
  justify-content: space-evenly;
  margin: 2px 0;
  border-left: 1px solid #1c1c1c;
  border-right: 1px solid #1c1c1c;
`;

/* ---------- taskbar ---------- */

const TaskBar = styled.footer`
  display: flex;
  height: 40px;
  background: #0e0f11;
  color: #fff;
`;
const TaskButton = styled.button`
  display: grid;
  place-items: center;
  width: ${(p) => p.$w || 49}px;
  background: ${(p) => (p.$active ? "#34383c" : "none")};
  ${(p) =>
    p.$open &&
    css`
      background-image: linear-gradient(#76b0e4, #76b0e4);
      background-size: ${p.$active ? "100%" : "40px"} 2px;
      background-position: bottom center;
      background-repeat: no-repeat;
    `}
`;
const TaskSearch = styled.label`
  display: flex;
  align-items: center;
  width: 344px;
  padding: 0 12px 0 10px;
  background: #f2f2f2;

  & > input {
    flex: 1;
    padding-left: 11px;
    font-size: 14px;
    color: #333;
  }
  & > input::placeholder {
    color: #333;
    opacity: 1;
  }
`;
const Ring = styled.span`
  width: 20px;
  height: 20px;
  border: 3px solid #111;
  border-radius: 50%;
`;
const Tray = styled.div`
  display: flex;
  align-items: center;
  margin-left: auto;
`;
const TrayButton = styled.button`
  display: grid;
  place-items: center;
  width: 24px;
  height: 40px;
`;
const Clock = styled.time`
  width: 64px;
  text-align: center;
  line-height: 18px;
  padding-bottom: 2px;
  font-size: 11px;
  white-space: pre-line;
`;
const ActionCenter = styled(TrayButton)`
  width: 49px;
  padding-right: 8px;
  margin-right: 4px;
  border-right: 1px solid #555;
`;

/* ---------- data ---------- */

const MENUS = [
  ["Edit", 45], ["Tools", 52], ["Group", 57], ["Views", 54], ["Create", 59],
  ["Modifiers", 73], ["Animation", 80], ["Graph Editors", 95], ["Rendering", 74],
  ["Civil View", 69], ["Customize", 80], ["Scripting", 66], ["Content", 62],
  ["Help", 44], ["XMesh", 50], ["Krakatoa", 60], ["Frost", 40], ["PhoenixFD", 60],
];

// "|" is a separator, "*" marks an active button, "+" a flyout
const MAIN_TOOLS_A = ["undo", "redo", "|", "link", "unlink", "bind", "|"];
const MAIN_TOOLS_B = ["selectObject", "selectName", "region+", "windowCross", "|", "move*", "rotate", "scale+", "place+"];
const MAIN_TOOLS_C = ["pivot+", "|", "manipulate", "keyboard*", "|", "snap3+", "angle", "percent", "spinner", "|", "braces"];
const MAIN_TOOLS_D = [
  "|", "mirror", "align+", "|", "layers", "toggleLayers", "|", "ribbonToggle*", "curve",
  "schematic", "|", "material+", "|", "renderSetup", "renderFrame", "render+",
];
const FUME_TOOLS = [
  "fumeFx", "orb", "gridOrb", "dotOrb", "boxOrb", "crescent", "|", "wireOrb", "waveOrb",
  "panelOrb", "arrowsOrb", "|", "playFill", "stopFill", "stopCross",
];
const PHOENIX_TOOLS = [
  "explosion", "ocean", "fireRing", "waterRing", "particles", "|", "simPlay", "simPause",
  "simStop", "simTrash", "|", "flame+", "blast+", "smoke+", "cigarette", "candle", "clouds",
  "|", "drops+", "beer+", "honey+", "splat", "bucket", "swirl", "waterfall", "sea", "|", "help",
];

const FILTERS_ON = [
  "circle", "shapes", "bulb", "camera", "ruler", "waves", "group", "xref", "bone",
  "container", "snow", "eye",
];

const SPLINE = [
  [678, 793], [753, 798], [829, 802], [904, 803], [956, 800], [1004, 793], [1047, 781],
  [1076, 762], [1101, 730], [1128, 686], [1150, 632], [1165, 573], [1169, 516], [1159, 460],
  [1129, 411], [1085, 371], [1031, 340], [976, 320], [917, 311], [865, 315], [820, 333],
  [786, 368], [733, 445], [711, 484], [698, 516], [696, 545], [708, 572], [737, 594],
  [778, 609], [822, 617], [866, 619], [906, 615], [937, 607], [956, 598], [965, 585],
];
const VERTICES = [[1076, 762], [786, 368], [737, 594], [965, 585]];
const GRID_X = Array.from({ length: 20 }, (_, i) => Math.floor(909 + (i - 8) * 70.5) + 0.5);
const GRID_Y = Array.from({ length: 12 }, (_, i) => Math.floor(862 + (i - 10) * 70.5) + 0.5);

const Tools = ({ items, size }) =>
  items.map((item, i) => {
    if (item === "|") return <i key={i} />;
    const name = item.replace(/[*+]/, "");
    return (
      <ToolButton key={name} title={name} $on={item.endsWith("*")} $fly={item.endsWith("+")}>
        <Icon name={name} size={size} />
      </ToolButton>
    );
  });

const Scene = () => (
  <svg viewBox="303 166 1412 777" preserveAspectRatio="xMidYMid slice">
    <g stroke="#4b4b4b">
      {GRID_X.map((x) => (
        <path key={x} d={`M${x} 100V1000`} />
      ))}
      {GRID_Y.map((y) => (
        <path key={y} d={`M200 ${y}H1800`} />
      ))}
    </g>
    <path d="M909.500 100V1000M200 862.500H1800" stroke="#0a0a0a" />
    <path d="M557.500 100V862.500H1262.500V100M557.500 855.500h7v7" fill="none" stroke="#e09a28" />
    <polyline points={SPLINE.join(" ")} fill="none" stroke="#f4f4f4" strokeWidth="1.200" />
    <path d="M1035 308L1220 509" stroke="#c8bc48" />
    {VERTICES.map(([x, y]) => (
      <rect key={x} x={x - 3} y={y - 3} width="6" height="6" fill="#fff" />
    ))}
    <rect x="675" y="790" width="6" height="6" fill="#f4f020" />
    <rect x="1032" y="305" width="6" height="6" fill="#18cc30" />
    <rect x="1129" y="377" width="33" height="33" fill="#6a6628" />
    <path d="M1129.500 391V337M1129 377.500h33.500v33M1149 410.500h54" fill="none" stroke="#f4f030" />
    <path d="M1129.500 314l5 24h-10z" fill="#0a960a" />
    <path d="M1228 410.500l-26-5v10z" fill="#c00000" />
    <text x="1129" y="310" fontSize="11" fill="#d8d428">y</text>
    <text x="1228" y="410" fontSize="11" fill="#d8d428">x</text>
    <rect x="1126" y="409" width="6" height="6" fill="#e00808" />
    <rect x="1121.500" y="402.500" width="15" height="15" fill="none" stroke="#b8b8b8" />
    <g transform="translate(1214 508) scale(.75)">
      <path
        d="M12 0l5 6h-3v4h4V7l6 5-6 5v-3h-4v4h3l-5 6-5-6h3v-4H6v3l-6-5 6-5v3h4V6H7z"
        fill="#fff"
        stroke="#222"
        strokeWidth=".7"
      />
    </g>
    <ellipse cx="1660" cy="237" rx="37" ry="3" fill="none" stroke="#8c8c8c" strokeWidth="1.500" strokeDasharray="20 3" />
    <rect x="1644" y="205" width="31" height="31" fill="#7c7c7c" stroke="#8a8a8a" />
    <text x="1660" y="224" fontSize="8" textAnchor="middle" fill="#484848">FRONT</text>
    <path d="M328.500 893v24" stroke="#1818a0" strokeWidth="1.500" />
    <path d="M333 916.500h22" stroke="#8c1414" strokeWidth="1.500" />
    <text x="328" y="893" fontSize="9" fill="#2020a8">z</text>
    <text x="329" y="918" fontSize="9" fill="#1c8c1c">y</text>
    <text x="353" y="918" fontSize="9" fill="#981414">x</text>
  </svg>
);

const RollHead = ({ open, children }) => (
  <RolloutHead aria-expanded={!!open}>
    <Svg $size={6} viewBox="0 0 6 6">
      <path d={open ? "M0 1h6L3 6z" : "M1 0v6l4-3z"} fill="#b0b0b0" />
    </Svg>
    {children}
    <Svg $size={7} viewBox="0 0 7 7">
      <path d="M0 1h7M0 3.500h7M0 6h7" stroke="#aaa" strokeDasharray="1 2" />
    </Svg>
  </RolloutHead>
);

const CheckBox = ({ type = "checkbox", name, on, off, w, children }) => (
  <Check $w={w} $off={off}>
    <input type={type} name={name} defaultChecked={on} disabled={off} />
    {children}
  </Check>
);

const App = () => (
  <>
    <GlobalStyle />
    <Page>
      <TitleBar>
        <LogoButton aria-label="Application menu">
          <Svg $size={39} viewBox="0 0 39 39">
            <text x="10" y="27" fontSize="31" fontWeight="bold" fill="#13848c">3</text>
            <text x="19" y="37" fontSize="8" fontWeight="bold" textAnchor="middle" fill="#111">MAX</text>
            <path d="M31 18h6l-3 4z" fill="#333" />
          </Svg>
        </LogoButton>
        <QuickAccess>
          {["newFile", "open", "save", "undoSmall"].map((name) => (
            <QuickButton key={name} title={name}>
              <Icon name={name} size={16} />
            </QuickButton>
          ))}
          <QuickButton $w={12} title="Undo list"><Caret /></QuickButton>
          <QuickButton title="Redo"><Icon name="redoSmall" size={16} /></QuickButton>
          <QuickButton $w={12} title="Redo list"><Caret /></QuickButton>
          <QuickButton title="Project folder"><Icon name="project" size={17} /></QuickButton>
          <WorkspaceSelect $w={129} $h={20}>
            <select aria-label="Workspace" defaultValue="d">
              <option value="d">Workspace: Default</option>
            </select>
          </WorkspaceSelect>
          <QuickButton $w={18} title="Customize"><Caret $color="#222" /></QuickButton>
        </QuickAccess>
        <Title>
          <span>Autodesk 3ds Max 2017</span>
          <span>Spline_Follow.max</span>
        </Title>
        <InfoCenter>
          <QuickButton $w={14} title="Collapse">
            <Svg $size={6} viewBox="0 0 6 6"><path d="M1 0v6l4-3z" fill="#444" /></Svg>
          </QuickButton>
          <input type="text" aria-label="Search help" placeholder="Type a keyword or phrase" />
          {["binoculars", "dish", "star", "user"].map((name) => (
            <QuickButton key={name} title={name}>
              <Icon name={name} size={16} />
            </QuickButton>
          ))}
          <SignIn>Sign In<Caret /></SignIn>
          <QuickButton $w={32} title="Exchange"><Icon name="exchange" size={16} /></QuickButton>
          <QuickButton $w={36} title="Help"><Icon name="helpBall" size={17} /></QuickButton>
          <QuickButton $w={6} title="Help menu"><Caret /></QuickButton>
        </InfoCenter>
        <WindowButtons>
          <button aria-label="Minimize"><Icon name="minimize" size={11} /></button>
          <button aria-label="Restore"><Icon name="restore" size={11} /></button>
          <button aria-label="Close"><Icon name="close" size={11} /></button>
        </WindowButtons>
      </TitleBar>

      <MenuBar>
        {MENUS.map(([name, w]) => (
          <MenuItem key={name} $w={w}>{name}</MenuItem>
        ))}
      </MenuBar>

      <ToolRow>
        <Toolbar $sep={7}>
          <Tools items={MAIN_TOOLS_A} size={23} />
          <Select w={67} label="Selection filter" value="All" />
          <Tools items={MAIN_TOOLS_B} size={23} />
          <Select w={68} label="Reference coordinate system" value="View" />
          <Tools items={MAIN_TOOLS_C} size={23} />
          <Select w={118} label="Named selection set" value="Create Selection Se" />
          <Tools items={MAIN_TOOLS_D} size={23} />
        </Toolbar>
      </ToolRow>

      <Ribbon>
        <RibbonBody>
          <RibbonTabs>
            <RibbonTab $on $w={82} $gap={22}>Modeling</RibbonTab>
            <RibbonTab $w={92}>Freeform</RibbonTab>
            <RibbonTab $w={92}>Selection</RibbonTab>
            <RibbonTab $w={109}>Object Paint</RibbonTab>
            <RibbonTab $w={79}>Populate</RibbonTab>
            <MinimizeRibbon title="Minimize ribbon">
              <span><Caret /></span>
              <Caret $color="#bbb" />
            </MinimizeRibbon>
          </RibbonTabs>
          <RibbonPanel>Polygon Modeling</RibbonPanel>
        </RibbonBody>
      </Ribbon>

      <ToolRow>
        <Toolbar $sep={8} $end={3}>
          <Tools items={FUME_TOOLS} size={20} />
        </Toolbar>
        <Toolbar $sep={8} $end={3}>
          <Tools items={PHOENIX_TOOLS} size={23} />
        </Toolbar>
      </ToolRow>

      <Main>
        <LayoutStrip>
          <ExpandButton aria-label="Expand viewport layouts">
            <Svg $size={9} viewBox="0 0 9 9"><path d="M2 0v9l5-4.500z" fill="#e4e4e4" /></Svg>
          </ExpandButton>
          <LayoutButton aria-label="Viewport layout"><span /></LayoutButton>
        </LayoutStrip>

        <Explorer>
          <ExplorerMenu>
            <MenuItem $w={50}>Select</MenuItem>
            <MenuItem $w={57}>Display</MenuItem>
            <MenuItem $w={39}>Edit</MenuItem>
            <MenuItem $w={60}>Customize</MenuItem>
          </ExplorerMenu>
          <FindRow>
            <input type="text" aria-label="Find" />
            <SmallButton aria-label="Clear">
              <Svg $size={10} viewBox="0 0 10 10">
                <path d="M1 1l8 8M9 1L1 9" stroke="#aaa" strokeWidth="2" />
              </Svg>
            </SmallButton>
            <SmallButton $on aria-label="Filter"><Icon name="funnelArrow" size={17} /></SmallButton>
            <VLine $color="#888" />
            <SmallButton $w={32} aria-label="Lock cell editing"><Icon name="lock" size={15} /></SmallButton>
            <More>»</More>
          </FindRow>
          <ExplorerBody>
            <FilterColumn>
              {FILTERS_ON.map((name) => (
                <FilterButton key={name} $on title={name}><Icon name={name} size={16} /></FilterButton>
              ))}
              <hr />
              {["doc", "docBlank", "docLine"].map((name) => (
                <FilterButton key={name} title={name}><Icon name={name} size={15} /></FilterButton>
              ))}
              <hr />
              {["funnelGear", "funnel", "brick"].map((name) => (
                <FilterButton key={name} title={name}><Icon name={name} size={15} /></FilterButton>
              ))}
            </FilterColumn>
            <SceneList>
              <SceneTable>
                <colgroup>
                  <col width="50" />
                  <col />
                  <col width="63" />
                </colgroup>
                <thead>
                  <tr>
                    <th colSpan="2">Name (Sorted Ascending)<span>▲</span></th>
                    <th>Frozen</th>
                  </tr>
                </thead>
                <tbody>
                  <SceneRow>
                    <td><RowIcons><Icon name="eye" size={13} /><Icon name="circle" size={14} /></RowIcons></td>
                    <td>FumeFX001</td>
                    <td><Icon name="flake" size={12} /></td>
                  </SceneRow>
                  <SceneRow $on>
                    <td><RowIcons><Icon name="eye" size={13} /><Icon name="shapesFill" size={14} /></RowIcons></td>
                    <td>Line001</td>
                    <td><Icon name="flake" size={12} /></td>
                  </SceneRow>
                </tbody>
              </SceneTable>
              <HScroll>
                <button aria-label="Scroll left">
                  <Svg $size={9} viewBox="0 0 9 9"><path d="M6 0L2 4.500L6 9" stroke="#333" fill="none" strokeWidth="2" /></Svg>
                </button>
                <span />
                <button aria-label="Scroll right">
                  <Svg $size={9} viewBox="0 0 9 9"><path d="M3 0l4 4.500L3 9" stroke="#333" fill="none" strokeWidth="2" /></Svg>
                </button>
              </HScroll>
            </SceneList>
          </ExplorerBody>
          <ExplorerFoot>
            <LayerSelect $w={160} $h={22}>
              <select aria-label="Explorer workspace" defaultValue="d">
                <option value="d">Workspace: Default</option>
              </select>
            </LayerSelect>
            <VLine />
            <SmallButton aria-label="Sort by layer"><Icon name="stack" size={15} /></SmallButton>
            <SmallButton $on aria-label="Sort by hierarchy"><Icon name="tree" size={17} /></SmallButton>
            <VLine />
            <More>»</More>
          </ExplorerFoot>
        </Explorer>

        <Center>
          <Viewport>
            <ViewLabels>
              <span>[+]</span>
              <span>[Front ]</span>
              <span>[Standard ]</span>
              <span>[Wireframe ]</span>
            </ViewLabels>
            <Scene />
          </Viewport>
          <SliderRow>
            <button aria-label="Previous frame">&lt;</button>
            <button>0 / 100</button>
            <button aria-label="Next frame">&gt;</button>
          </SliderRow>
          <TrackRow>
            <button aria-label="Open mini curve editor"><Icon name="curveSmall" size={15} /></button>
            <Ruler>
              {Array.from({ length: 101 }, (_, i) => (
                <Frame key={i} $major={i % 5 === 0} $now={i === 0}>
                  {i % 5 === 0 ? <span>{i}</span> : null}
                </Frame>
              ))}
            </Ruler>
          </TrackRow>
        </Center>

        <CommandPanel>
          <PanelTabs>
            {["tabCreate", "tabModify", "tabHierarchy", "tabMotion", "tabDisplay", "tabUtil"].map((name) => (
              <button key={name} title={name}><Icon name={name} size={17} /></button>
            ))}
          </PanelTabs>
          <NameRow>
            <input type="text" aria-label="Object name" defaultValue="Line001" />
            <input type="color" aria-label="Object color" defaultValue="#9cc8f4" />
          </NameRow>
          <ModifierSelect>
            <Select label="Modifier List" value="Modifier List" />
          </ModifierSelect>
          <Stack>
            <Svg $size={9} viewBox="0 0 9 9"><path d="M2 0v9l5-4.500z" fill="#ddd" /></Svg>
            <StackItem>
              Line
              <Svg $size={16} viewBox="0 0 16 16">
                <path d="M1 4h3M9 4h3M3 10h3M12 10h3M2.500 2.500v3M10.500 2.500v3M4.500 8.500v3M13.500 8.500v3" stroke="#000" />
              </Svg>
            </StackItem>
          </Stack>
          <StackTools>
            <button title="Pin stack"><Icon name="pin" size={14} /></button>
            <VLine $h={16} />
            <button title="Show end result"><Icon name="tube" size={15} /></button>
            <VLine $h={16} />
            <button title="Make unique"><Icon name="unique" size={16} /></button>
            <button title="Remove modifier"><Icon name="bin" size={15} /></button>
            <VLine $h={16} />
            <button title="Configure modifier sets"><Icon name="configure" size={15} /></button>
          </StackTools>
          <Divider>
            <Svg $size={13} viewBox="0 0 13 13">
              <path d="M0 5h13v3H0z" fill="#444" />
              <path d="M0 5.500h13M0 7.500h13" stroke="#ccc" strokeDasharray="1 1" />
            </Svg>
          </Divider>
          <ScrollArea>
            <Rollouts>
              <Rollout><RollHead>Rendering</RollHead></Rollout>
              <Rollout><RollHead>Interpolation</RollHead></Rollout>
              <Rollout>
                <RollHead open>Selection</RollHead>
                <SubObjects>
                  <button title="Vertex">
                    <Svg $size={22} viewBox="0 0 22 22">
                      <path d="M3 7h2v3H3zM12 7h3v2h-3zM7 13h3v2H7zM18 13h2v3h-2z" fill="#e06010" />
                    </Svg>
                  </button>
                  <button title="Segment">
                    <Svg $size={16} viewBox="0 0 16 16"><path d="M4 11l5-5 3 3" stroke="#b82424" strokeWidth="2" fill="none" /></Svg>
                  </button>
                  <button title="Spline">
                    <Svg $size={16} viewBox="0 0 16 16"><path d="M0 7l4 4 5-5 6 5" stroke="#d01818" strokeWidth="2.500" fill="none" /></Svg>
                  </button>
                </SubObjects>
                <Group>
                  <legend>Named Selections:</legend>
                  <Line $h={17} $in={11} $gap={11}>
                    <PushButton $w={54}>Copy</PushButton>
                    <PushButton $w={54} disabled>Paste</PushButton>
                  </Line>
                </Group>
                <Group $top={6} $pad={8}>
                  <Line $h={15} $in={11}><CheckBox>Lock Handles</CheckBox></Line>
                  <Line $h={15} $in={18}>
                    <CheckBox type="radio" name="handles" on w={57}>Alike</CheckBox>
                    <CheckBox type="radio" name="handles">All</CheckBox>
                  </Line>
                  <Line $h={24}>
                    <CheckBox w={93}>Area Selection:</CheckBox>
                    <Spin hidden label="Area selection size" value="0.1" w={46} h={15} />
                  </Line>
                  <Line $h={11}><CheckBox>Segment End</CheckBox></Line>
                  <Line $h={26} $in={30}><PushButton $w={73} $h={18}>Select By...</PushButton></Line>
                </Group>
                <Group $top={1} $pad={1}>
                  <legend>Display</legend>
                  <Line $h={15} $in={11}><CheckBox>Show Vertex Numbers</CheckBox></Line>
                  <Line $h={15} $in={42}><CheckBox off>Selected Only</CheckBox></Line>
                </Group>
                <SelectionInfo>Spline 1/Vert 3 Selected</SelectionInfo>
              </Rollout>
              <Rollout><RollHead>Soft Selection</RollHead></Rollout>
              <Rollout>
                <RollHead open>Geometry</RollHead>
                <Group $top={8} $pad={1}>
                  <legend>New Vertex Type</legend>
                  <Line $h={18} $in={2}>
                    <CheckBox type="radio" name="vertex" on w={57}>Linear</CheckBox>
                    <CheckBox type="radio" name="vertex">Bezier</CheckBox>
                  </Line>
                  <Line $h={18} $in={2}>
                    <CheckBox type="radio" name="vertex" w={57}>Smooth</CheckBox>
                    <CheckBox type="radio" name="vertex">Bezier Corner</CheckBox>
                  </Line>
                </Group>
                <ButtonGrid>
                  <PushButton $h={16}>Create Line</PushButton>
                  <PushButton $h={16}>Break</PushButton>
                  <PushButton $h={16}>Attach</PushButton>
                  <CheckBox>Reorient</CheckBox>
                  <PushButton $h={16}>Attach Mult.</PushButton>
                  <PushButton $h={16}>Cross Section</PushButton>
                </ButtonGrid>
                <Group $pad={6}>
                  <PushButton $w={66} $h={18}>Refine</PushButton>
                </Group>
              </Rollout>
            </Rollouts>
            <Watermark>
              <strong>FX</strong>
              <span>RAJ PAKHARE</span>
            </Watermark>
          </ScrollArea>
        </CommandPanel>
      </Main>

      <StatusBar>
        <Listener>
          <input type="text" aria-label="Macro recorder" />
          <input type="text" aria-label="MAXScript listener" defaultValue="Welcome to MAXScript" />
        </Listener>
        <Prompts>
          <p>1 Shape Selected</p>
          <p>Click or click-and-drag to select objects</p>
        </Prompts>
        <Coords>
          <CoordRow>
            <StatusIcon title="Isolate"><Icon name="isolate" size={14} /></StatusIcon>
            <StatusIcon title="Selection lock"><Icon name="lock" size={15} /></StatusIcon>
            <StatusIcon title="Absolute mode"><Icon name="absolute" size={15} /></StatusIcon>
            <Spin label="X:" value="-1.001" />
            <Spin label="Y:" value="-4.42" />
            <Spin label="Z:" value="0.0" />
            <span>Grid = 10.0</span>
          </CoordRow>
          <CoordRow $justify="flex-end">
            <TimeTag><Icon name="cube" size={14} />Add Time Tag</TimeTag>
          </CoordRow>
        </Coords>
        <Keys>
          <PushButton aria-label="Set keys"><Icon name="addKey" size={28} /></PushButton>
          <PushButton $h={20}>Auto Key</PushButton>
          <Select label="Key set" value="Selected" h={20} />
          <PushButton $h={20}>Set Key</PushButton>
          <StatusIcon title="Default tangents"><Icon name="tangent" size={16} /></StatusIcon>
          <PushButton $h={20}>Key Filters...</PushButton>
        </Keys>
        <PlayGrid>
          <button title="Go to start"><Icon name="toStart" size={15} /></button>
          <PlayCell>
            <button title="Previous frame"><Icon name="prevKey" size={14} /></button>
            <button title="Play"><Icon name="play" size={15} /></button>
            <button title="Next frame"><Icon name="nextKey" size={14} /></button>
          </PlayCell>
          <button title="Go to end"><Icon name="toEnd" size={15} /></button>
          {["zoom", "zoomAll", "extents", "extentsAll"].map((name) => (
            <button key={name} title={name}><Icon name={name} size={15} /></button>
          ))}
          <button title="Key mode"><Icon name="keyMode" size={12} /></button>
          <PlayCell><Spin hidden label="Current frame" value="0" w={68} h={17} /></PlayCell>
          <button title="Time configuration"><Icon name="timeConfig" size={15} /></button>
          {["zoomRegion", "pan", "orbit", "maximize"].map((name) => (
            <button key={name} title={name}><Icon name={name} size={15} /></button>
          ))}
        </PlayGrid>
      </StatusBar>

      <TaskBar>
        <TaskButton $w={48} aria-label="Start"><FaWindows size={16} /></TaskButton>
        <TaskSearch>
          <Ring />
          <input type="text" aria-label="Search" placeholder="Type here to search" />
          <Icon name="mic" size={18} />
        </TaskSearch>
        <TaskButton aria-label="Task view"><Icon name="taskView" size={17} /></TaskButton>
        <TaskButton $open aria-label="Chrome"><Icon name="chrome" size={23} /></TaskButton>
        <TaskButton aria-label="Edge"><FaEdgeLegacy size={21} color="#1a7cd8" /></TaskButton>
        <TaskButton $open aria-label="File Explorer"><Icon name="folder" size={22} /></TaskButton>
        <TaskButton $open $active aria-label="3ds Max"><Icon name="maxTile" size={24} /></TaskButton>
        <TaskButton $open aria-label="Camtasia"><Icon name="camtasia" size={24} /></TaskButton>
        <Tray>
          <TrayButton aria-label="Show hidden icons"><Icon name="chevronUp" size={13} /></TrayButton>
          <TrayButton aria-label="Cloud"><Icon name="cloudWarn" size={17} /></TrayButton>
          <TrayButton aria-label="Network"><Icon name="netError" size={16} /></TrayButton>
          <TrayButton aria-label="Volume"><Icon name="volume" size={17} /></TrayButton>
          <TrayButton aria-label="Dropbox"><FaDropbox size={13} color="#b8b8b8" /></TrayButton>
          <Clock>{"2:57 PM\n8/22/2018"}</Clock>
          <ActionCenter aria-label="Action center"><Icon name="notify" size={16} /></ActionCenter>
        </Tray>
      </TaskBar>
    </Page>
  </>
);

export default App;
